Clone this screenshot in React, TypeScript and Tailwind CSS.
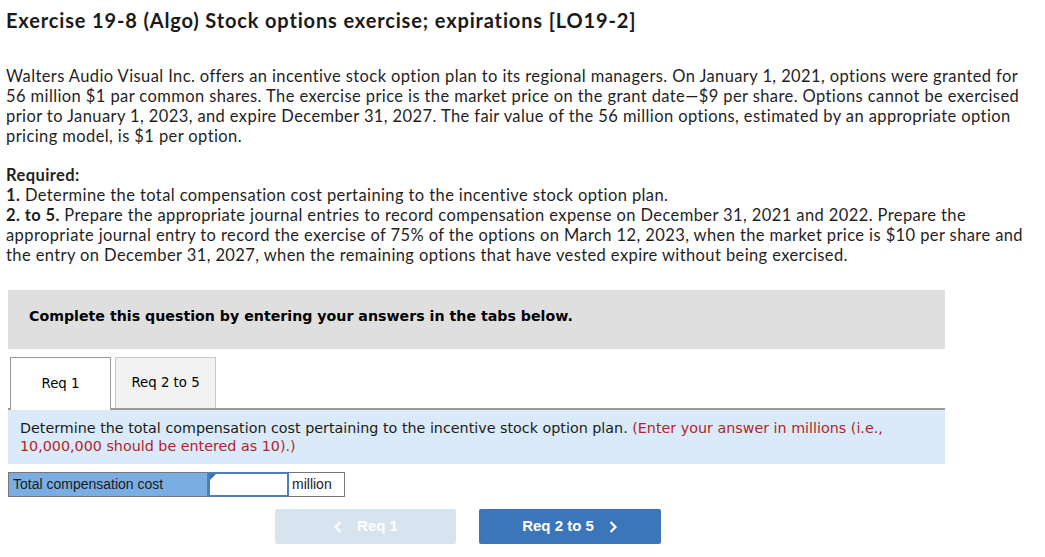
export default function App() {
  return (
    <div className="min-h-[557px] bg-white text-[#1f1f1f] font-['Lato','Open_Sans',sans-serif]">
      <div className="px-[6px] pt-[8px]">
        <h1 className="text-[20px] font-bold leading-[24px] tracking-[0.85px] text-[#1a1a1a]">
          Exercise 19-8 (Algo) Stock options exercise; expirations [LO19-2]
        </h1>

        <div className="tracking-[0.4px]">
          <p className="mt-[34px] text-[16.5px] leading-[20px]">
            Walters Audio Visual Inc. offers an incentive stock option plan to its regional managers. On January 1, 2021, options were granted for
            <br />
            56 million $1 par common shares. The exercise price is the market price on the grant date—$9 per share. Options cannot be exercised
            <br />
            prior to January 1, 2023, and expire December 31, 2027. The fair value of the 56 million options, estimated by an appropriate option
            <br />
            pricing model, is $1 per option.
          </p>

          <div className="mt-[19px] text-[16.5px] leading-[20px]">
            <p className="font-bold">Required:</p>
            <p>
              <span className="font-bold">1.</span> Determine the total compensation cost pertaining to the incentive stock option plan.
            </p>
            <p>
              <span className="font-bold">2. to 5.</span> Prepare the appropriate journal entries to record compensation expense on December 31, 2021 and 2022. Prepare the
              <br />
              appropriate journal entry to record the exercise of 75% of the options on March 12, 2023, when the market price is $10 per share and
              <br />
              the entry on December 31, 2027, when the remaining options that have vested expire without being exercised.
            </p>
          </div>
        </div>
      </div>

      <div className="ml-[8px] w-[937px]">
        <div className="mt-[25px] flex h-[59px] items-start bg-[#dfdfdf] px-[21px] pt-[16px] font-['DejaVu_Sans','Verdana',sans-serif] text-[14.2px] font-bold text-black">
          Complete this question by entering your answers in the tabs below.
        </div>

        {/* tabs */}
        <div className="mt-[8px] flex gap-[4px] pl-[2px] font-['DejaVu_Sans','Verdana',sans-serif] text-[13.3px] text-black">
          <div className="-mb-[2px] flex h-[53px] w-[101px] items-center justify-center border border-b-0 border-[#999] bg-white">
            Req 1
          </div>
          <div className="flex h-[51px] w-[101px] items-center justify-center border border-b-0 border-[#c8c8c8] bg-[#f2f2f2]">
            Req 2 to 5
          </div>
        </div>

        <div className="border-t-2 border-[#9a9a9a] bg-[#daeaf8] px-[12px] pb-[9px] pt-[9px] font-['DejaVu_Sans','Verdana',sans-serif] text-[14.3px] leading-[18px] text-[#1a1a1a]">
          Determine the total compensation cost pertaining to the incentive stock option plan.{" "}
          <span className="text-[#b3232b]">
            (Enter your answer in millions (i.e.,
            <br />
            10,000,000 should be entered as 10).)
          </span>
        </div>

        {/* answer row */}
        <div className="mt-[8px] flex h-[25px] font-['Liberation_Sans','Arial',sans-serif] text-[14px]">
          <div className="flex w-[200px] items-center border border-[#777] bg-[#7aaee3] pl-[4px] text-[#1a1a1a]">
            Total compensation cost
          </div>
          <div className="relative w-[81px] border-2 border-[#4a7ebb] bg-white">
            <div className="absolute left-0 top-0 h-0 w-0 border-r-[6px] border-t-[6px] border-r-transparent border-t-[#3a6fb0]" />
          </div>
          <div className="flex w-[56px] items-center border border-l-0 border-[#777] bg-white pl-[3px] text-[#1a1a1a]">
            million
          </div>
        </div>

        {/* nav buttons */}
        <div className="mt-[12px] flex gap-[23px] pl-[267px] font-['Liberation_Sans','Arial',sans-serif] text-[15px] font-bold text-white">
          <div className="flex h-[35px] w-[181px] items-center justify-center gap-[14px] rounded-[2px] bg-[#d8e3f0]">
            <svg width="10" height="14" viewBox="0 0 10 14" fill="none">
              <path d="M7.5 2 L2.5 7 L7.5 12" stroke="white" strokeWidth="2.2" />
            </svg>
            <span>Req 1</span>
          </div>
          <div className="flex h-[35px] w-[182px] items-center justify-center gap-[14px] rounded-[2px] bg-[#3a76b9]">
            <span>Req 2 to 5</span>
            <svg width="10" height="14" viewBox="0 0 10 14" fill="none">
              <path d="M2.5 2 L7.5 7 L2.5 12" stroke="white" strokeWidth="2.2" />
            </svg>
          </div>
        </div>
      </div>
    </div>
  )
}
